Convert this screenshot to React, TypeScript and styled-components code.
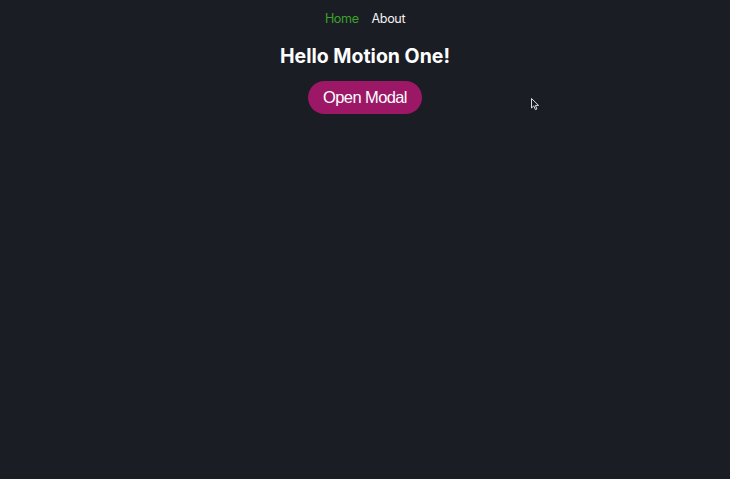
import React from 'react';
import styled, { createGlobalStyle } from 'styled-components';

const GlobalStyle = createGlobalStyle`
  html, body {
    margin: 0;
    padding: 0;
    background: #1b1d24;
    font-family: Inter, 'Noto Sans', sans-serif;
    color: #fff;
  }
`;

const Page = styled.div`
  position: relative;
  min-height: 479px;
  display: flex;
  flex-direction: column;
  align-items: center;
`;

const Nav = styled.nav`
  display: flex;
  gap: 13px;
  padding-top: 10px;
`;

const NavLink = styled.a<{ active?: boolean }>`
  font-size: 12.6px;
  line-height: 17px;
  letter-spacing: -0.4px;
  text-decoration: none;
  color: ${props => (props.active ? '#3ba12c' : '#f2f2f2')};
  cursor: pointer;
`;

const Title = styled.h1`
  margin: 17px 0 0;
  font-size: 19.5px;
  line-height: 24px;
  font-weight: 700;
`;

const OpenButton = styled.button`
  margin-top: 13px;
  height: 33px;
  padding: 0 15px;
  border: 0;
  border-radius: 999px;
  background: #9c1766;
  color: #fff;
  font-family: 'Liberation Sans', Arial, sans-serif;
  font-size: 16.5px;
  letter-spacing: -0.6px;
  cursor: pointer;
`;

const Pointer = styled.svg`
  position: absolute;
  left: 531px;
  top: 98px;
`;

export default function App() {
  return (
    <>
      <GlobalStyle />
      <Page>
        <Nav>
          <NavLink active>Home</NavLink>
          <NavLink>About</NavLink>
        </Nav>
        <Title>Hello Motion One!</Title>
        <OpenButton>Open Modal</OpenButton>
        {/* mouse pointer */}
        <Pointer width="9" height="13" viewBox="0 0 9 13">
          <path d="M0.5 0.5 L0.5 10 L2.8 7.9 L4.4 11.6 L5.9 11 L4.4 7.4 L7.6 7.4 Z" fill="#1b1d24" stroke="#ddd" strokeWidth="1" />
        </Pointer>
      </Page>
    </>
  );
}
